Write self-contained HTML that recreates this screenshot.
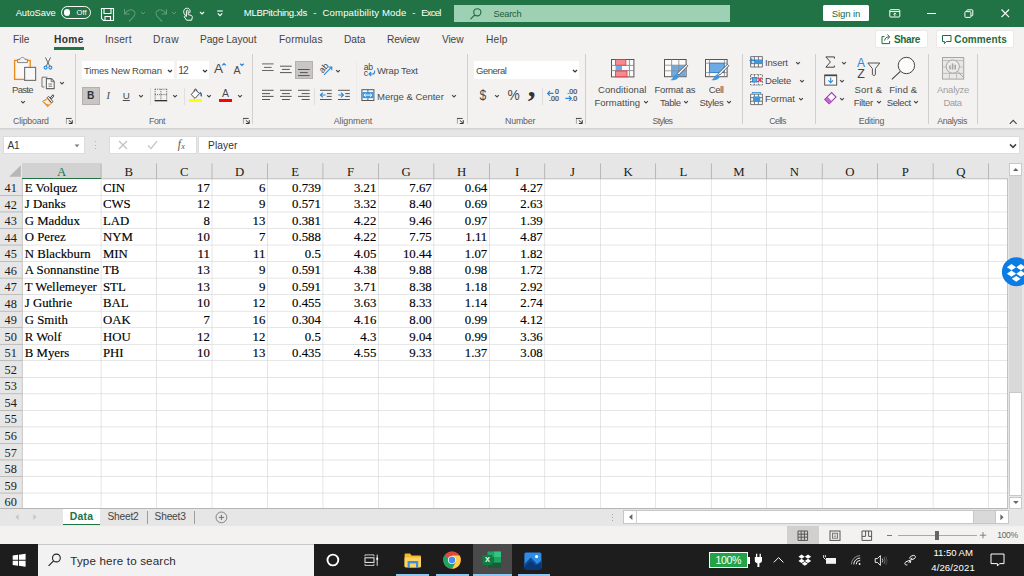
<!DOCTYPE html>
<html lang="en"><head><meta charset="utf-8"><title>MLBPitching.xls - Excel</title>
<style>
html,body{margin:0;padding:0}
body{width:1024px;height:576px;position:relative;overflow:hidden;background:#fff;font-family:'Liberation Sans',sans-serif;}
div,svg,span.t{position:absolute;}
span.t{white-space:pre;}
svg{overflow:visible}
</style></head>
<body>
<div style="left:0px;top:0px;width:1024px;height:26.5px;background:#217346;"></div>
<span class="t" style="left:15.70px;letter-spacing:-0.094px;top:8.0px;font-size:9.4px;line-height:9.4px;color:#fff;">AutoSave</span>
<div style="left:61px;top:6.2px;width:30px;height:12.6px;box-sizing:border-box;border:1px solid #fff;border-radius:7px;"></div>
<div style="left:63.8px;top:9.3px;width:6.4px;height:6.4px;background:#fff;border-radius:50%;"></div>
<span class="t" style="left:76.60px;top:9.1px;font-size:7.6px;line-height:7.6px;color:#fff;">Off</span>
<svg style="left:100px;top:7px;" width="16" height="15" viewBox="0 0 16 15"><path d="M1.5 1.5 H13.5 V13.5 H3.5 L1.5 11.5 Z M4 1.5 V6.5 H11 V1.5 M5 13.5 V9.5 H10.5 V13.5" fill="none" stroke="#fff" stroke-width="1.1"/></svg>
<svg style="left:123px;top:6px;" width="16" height="16" viewBox="0 0 16 16"><path d="M1.5 3 V8 H6.5 M1.8 7.8 C4 3.5 9 2.5 11.5 5.5 C13.5 8 11 10.5 6 15.5" fill="none" stroke="#5f9c7c" stroke-width="1.1"/></svg>
<svg style="left:139.2px;top:8.6px;" width="8" height="8" viewBox="0 0 8 8"><path d="M2 3.0 L4 5.0 L6 3.0" fill="none" stroke="#5f9c7c" stroke-width="1"/></svg>
<svg style="left:152px;top:6px;" width="16" height="16" viewBox="0 0 16 16"><path d="M14.5 3 V8 H9.5 M14.2 7.8 C12 3.5 7 2.5 4.5 5.5 C2.5 8 5 10.5 10 15.5" fill="none" stroke="#5f9c7c" stroke-width="1.1"/></svg>
<svg style="left:169.6px;top:8.6px;" width="8" height="8" viewBox="0 0 8 8"><path d="M2 3.0 L4 5.0 L6 3.0" fill="none" stroke="#5f9c7c" stroke-width="1"/></svg>
<svg style="left:182px;top:7px;" width="12" height="15" viewBox="0 0 12 15"><path d="M3.8 8.5 C1 7 0.8 2 4.3 1.3 C7.5 0.8 8.8 3.5 7.6 6 M4.4 9.5 V4.2 C4.4 2.8 6.2 2.8 6.2 4.2 V7.6 L9.2 8.4 C10.3 8.8 10.4 9.6 10.2 10.8 L9.6 13.2 H4.6 L2.4 10 C2 9 3.2 8.4 4.4 9.5" fill="none" stroke="#fff" stroke-width="1"/></svg>
<svg style="left:197.6px;top:8.8px;" width="8" height="8" viewBox="0 0 8 8"><path d="M2 3.0 L4 5.0 L6 3.0" fill="none" stroke="#fff" stroke-width="1.1"/></svg>
<svg style="left:215px;top:8px;" width="10" height="10" viewBox="0 0 10 10"><path d="M2.2 3 H7.8" stroke="#fff" stroke-width="1.1"/><path d="M2.8 5.4 L5 7.6 L7.2 5.4" fill="none" stroke="#fff" stroke-width="1.1"/></svg>
<span class="t" style="left:243.80px;letter-spacing:-0.346px;top:7.5px;font-size:9.6px;line-height:9.6px;color:#fff;">MLBPitching.xls</span>
<span class="t" style="left:313.30px;top:7.5px;font-size:9.6px;line-height:9.6px;color:#fff;">-</span>
<span class="t" style="left:322.50px;letter-spacing:0.130px;top:7.5px;font-size:9.6px;line-height:9.6px;color:#fff;">Compatibility Mode</span>
<span class="t" style="left:412.30px;top:7.5px;font-size:9.6px;line-height:9.6px;color:#fff;">-</span>
<span class="t" style="left:421.30px;letter-spacing:-0.867px;top:7.5px;font-size:9.6px;line-height:9.6px;color:#fff;">Excel</span>
<div style="left:454px;top:4.6px;width:276px;height:17.5px;background:#9ed0b3;"></div>
<svg style="left:468.8px;top:7px;" width="14" height="14" viewBox="0 0 14 14"><circle cx="8.3" cy="5.3" r="3.6" fill="none" stroke="#1e6b41" stroke-width="1.1"/><path d="M5.8 7.8 L1.5 12.2" stroke="#1e6b41" stroke-width="1.1"/></svg>
<span class="t" style="left:493.50px;letter-spacing:-0.225px;top:9.7px;font-size:9.2px;line-height:9.2px;color:#1e5a38;">Search</span>
<div style="left:823px;top:5.3px;width:45.5px;height:15.5px;background:#fff;border-radius:1.5px;"></div>
<span class="t" style="left:831.75px;letter-spacing:-0.141px;top:8.8px;font-size:9.6px;line-height:9.6px;color:#1e6b41;">Sign in</span>
<svg style="left:889px;top:9px;" width="12" height="9" viewBox="0 0 12 9"><rect x="0.8" y="0.7" width="10" height="7.3" rx="0.8" fill="none" stroke="#fff" stroke-width="1"/><path d="M0.8 2.6 H10.8" stroke="#fff" stroke-width="1"/><path d="M5.8 7.2 V4.2 M4.4 5.4 L5.8 4 L7.2 5.4" fill="none" stroke="#fff" stroke-width="0.9"/></svg>
<div style="left:926.5px;top:12.8px;width:9.5px;height:1.1px;background:#fff;"></div>
<svg style="left:963.5px;top:8.7px;" width="11" height="10" viewBox="0 0 11 10"><rect x="0.9" y="2.6" width="6" height="5.8" rx="0.8" fill="none" stroke="#fff" stroke-width="1"/><path d="M2.8 2.4 V1.6 Q2.8 0.8 3.6 0.8 H8 Q8.8 0.8 8.8 1.6 V6 Q8.8 6.8 8 6.8 H7.2" fill="none" stroke="#fff" stroke-width="1"/></svg>
<svg style="left:1001px;top:9.4px;" width="9" height="9" viewBox="0 0 9 9"><path d="M0.5 0.5 L8.1 8.1 M8.1 0.5 L0.5 8.1" stroke="#fff" stroke-width="1.1"/></svg>
<div style="left:0px;top:26.5px;width:1024px;height:26px;background:#f3f2f1;"></div>
<span class="t" style="left:13.00px;letter-spacing:0.026px;top:34.8px;font-size:10.2px;line-height:10.2px;color:#444;">File</span>
<span class="t" style="left:105.00px;letter-spacing:0.203px;top:34.8px;font-size:10.2px;line-height:10.2px;color:#444;">Insert</span>
<span class="t" style="left:153.00px;letter-spacing:0.573px;top:34.8px;font-size:10.2px;line-height:10.2px;color:#444;">Draw</span>
<span class="t" style="left:200.00px;letter-spacing:-0.072px;top:34.8px;font-size:10.2px;line-height:10.2px;color:#444;">Page Layout</span>
<span class="t" style="left:279.00px;letter-spacing:0.147px;top:34.8px;font-size:10.2px;line-height:10.2px;color:#444;">Formulas</span>
<span class="t" style="left:344.00px;letter-spacing:-0.010px;top:34.8px;font-size:10.2px;line-height:10.2px;color:#444;">Data</span>
<span class="t" style="left:387.00px;letter-spacing:-0.181px;top:34.8px;font-size:10.2px;line-height:10.2px;color:#444;">Review</span>
<span class="t" style="left:442.00px;letter-spacing:-0.135px;top:34.8px;font-size:10.2px;line-height:10.2px;color:#444;">View</span>
<span class="t" style="left:486.00px;letter-spacing:0.182px;top:34.8px;font-size:10.2px;line-height:10.2px;color:#444;">Help</span>
<span class="t" style="left:54.00px;letter-spacing:0.396px;top:34.8px;font-size:10.2px;line-height:10.2px;color:#333;font-weight:700;">Home</span>
<div style="left:54px;top:47px;width:30px;height:2.7px;background:#217346;"></div>
<div style="left:875px;top:30px;width:53px;height:18px;background:#fff;box-sizing:border-box;border:1px solid #ebe9e7;border-radius:2px;"></div>
<svg style="left:880px;top:33.4px;" width="12" height="12" viewBox="0 0 12 12"><path d="M4.5 3.6 H2 V10.6 H9.6 V8" fill="none" stroke="#1e6b41" stroke-width="1"/><path d="M4.6 7.6 C5 5 6.6 3.9 9 3.9 M7.4 1.6 L9.8 3.9 L7.4 6.2" fill="none" stroke="#1e6b41" stroke-width="1"/></svg>
<span class="t" style="left:894.00px;letter-spacing:-0.349px;top:34.6px;font-size:10px;line-height:10px;color:#1e6b41;font-weight:700;">Share</span>
<div style="left:935.5px;top:30px;width:78.5px;height:18px;background:#fff;box-sizing:border-box;border:1px solid #ebe9e7;border-radius:2px;"></div>
<svg style="left:941px;top:33.8px;" width="12" height="12" viewBox="0 0 12 12"><path d="M1.5 1.5 H10 V7.5 H5.4 L3.4 9.6 V7.5 H1.5 Z" fill="none" stroke="#1e6b41" stroke-width="1"/></svg>
<span class="t" style="left:954.30px;letter-spacing:0.116px;top:34.6px;font-size:10px;line-height:10px;color:#1e6b41;font-weight:700;">Comments</span>
<div style="left:0px;top:52px;width:1024px;height:76px;background:#f3f2f1;"></div>
<div style="left:0px;top:127.5px;width:1024px;height:34.5px;background:#e6e6e6;"></div>
<div style="left:0px;top:127.5px;width:1024px;height:3.5px;background:linear-gradient(#d2d0ce,#e6e6e6);"></div>
<div style="left:75.2px;top:54px;width:1px;height:70px;background:#d2d0ce;"></div>
<div style="left:252.3px;top:54px;width:1px;height:70px;background:#d2d0ce;"></div>
<div style="left:467.3px;top:54px;width:1px;height:70px;background:#d2d0ce;"></div>
<div style="left:585px;top:54px;width:1px;height:70px;background:#d2d0ce;"></div>
<div style="left:741.6px;top:54px;width:1px;height:70px;background:#d2d0ce;"></div>
<div style="left:815.4px;top:54px;width:1px;height:70px;background:#d2d0ce;"></div>
<div style="left:928.2px;top:54px;width:1px;height:70px;background:#d2d0ce;"></div>
<div style="left:977.3px;top:54px;width:1px;height:70px;background:#d2d0ce;"></div>
<span class="t" style="left:13.00px;letter-spacing:-0.207px;top:117.3px;font-size:8.8px;line-height:8.8px;color:#605e5c;">Clipboard</span>
<span class="t" style="left:149.00px;letter-spacing:-0.370px;top:117.3px;font-size:8.8px;line-height:8.8px;color:#605e5c;">Font</span>
<span class="t" style="left:333.80px;letter-spacing:-0.078px;top:117.3px;font-size:8.8px;line-height:8.8px;color:#605e5c;">Alignment</span>
<span class="t" style="left:505.00px;letter-spacing:-0.159px;top:117.3px;font-size:8.8px;line-height:8.8px;color:#605e5c;">Number</span>
<span class="t" style="left:652.50px;letter-spacing:-0.694px;top:117.3px;font-size:8.8px;line-height:8.8px;color:#605e5c;">Styles</span>
<span class="t" style="left:769.30px;letter-spacing:-0.641px;top:117.3px;font-size:8.8px;line-height:8.8px;color:#605e5c;">Cells</span>
<span class="t" style="left:858.80px;letter-spacing:-0.234px;top:117.3px;font-size:8.8px;line-height:8.8px;color:#605e5c;">Editing</span>
<span class="t" style="left:937.30px;letter-spacing:-0.395px;top:117.3px;font-size:8.8px;line-height:8.8px;color:#605e5c;">Analysis</span>
<svg style="left:65.8px;top:118px;" width="8" height="8" viewBox="0 0 8 8"><path d="M0.4 0.4 V5.8" stroke="#9a9a9a" stroke-width="0.9" fill="none"/><path d="M0 0.45 H5.7" stroke="#3a3a3a" stroke-width="0.9" fill="none"/><path d="M2.8 2.3 L6 5.2 M6.25 2.2 V5.5 H2.8" fill="none" stroke="#333" stroke-width="1"/></svg>
<svg style="left:243.4px;top:118px;" width="8" height="8" viewBox="0 0 8 8"><path d="M0.4 0.4 V5.8" stroke="#9a9a9a" stroke-width="0.9" fill="none"/><path d="M0 0.45 H5.7" stroke="#3a3a3a" stroke-width="0.9" fill="none"/><path d="M2.8 2.3 L6 5.2 M6.25 2.2 V5.5 H2.8" fill="none" stroke="#333" stroke-width="1"/></svg>
<svg style="left:457.4px;top:118px;" width="8" height="8" viewBox="0 0 8 8"><path d="M0.4 0.4 V5.8" stroke="#9a9a9a" stroke-width="0.9" fill="none"/><path d="M0 0.45 H5.7" stroke="#3a3a3a" stroke-width="0.9" fill="none"/><path d="M2.8 2.3 L6 5.2 M6.25 2.2 V5.5 H2.8" fill="none" stroke="#333" stroke-width="1"/></svg>
<svg style="left:576.2px;top:118px;" width="8" height="8" viewBox="0 0 8 8"><path d="M0.4 0.4 V5.8" stroke="#9a9a9a" stroke-width="0.9" fill="none"/><path d="M0 0.45 H5.7" stroke="#3a3a3a" stroke-width="0.9" fill="none"/><path d="M2.8 2.3 L6 5.2 M6.25 2.2 V5.5 H2.8" fill="none" stroke="#333" stroke-width="1"/></svg>
<svg style="left:1008px;top:117px;" width="10" height="10" viewBox="0 0 10 10"><path d="M1.8 6.8 L5.2 3.4 L8.6 6.8" fill="none" stroke="#444" stroke-width="1.1"/></svg>
<span class="t" style="left:12.00px;letter-spacing:-0.699px;top:85.25px;font-size:9.5px;line-height:9.5px;color:#4a4a4a;">Paste</span>
<svg style="left:18.5px;top:98px;" width="8" height="8" viewBox="0 0 8 8"><path d="M2.1 3.05 L4 4.95 L5.9 3.05" fill="none" stroke="#484848" stroke-width="1.1"/></svg>
<svg style="left:58px;top:79.2px;" width="8" height="8" viewBox="0 0 8 8"><path d="M2.1 3.05 L4 4.95 L5.9 3.05" fill="none" stroke="#484848" stroke-width="1.1"/></svg>
<div style="left:82.4px;top:61.1px;width:91.6px;height:17.9px;background:#fff;"></div>
<span class="t" style="left:84.00px;letter-spacing:-0.173px;top:66.05px;font-size:9.5px;line-height:9.5px;color:#4a4a4a;">Times New Roman</span>
<svg style="left:166px;top:66.6px;" width="8" height="8" viewBox="0 0 8 8"><path d="M2.0 3.0 L4 5.0 L6.0 3.0" fill="none" stroke="#333" stroke-width="1.2"/></svg>
<div style="left:176.6px;top:61.1px;width:32.6px;height:17.9px;background:#fff;"></div>
<span class="t" style="left:178.20px;letter-spacing:-0.744px;top:65.5px;font-size:10.2px;line-height:10.2px;color:#4a4a4a;">12</span>
<svg style="left:201px;top:66.6px;" width="8" height="8" viewBox="0 0 8 8"><path d="M2.0 3.0 L4 5.0 L6.0 3.0" fill="none" stroke="#333" stroke-width="1.2"/></svg>
<span class="t" style="left:214.00px;top:61.8px;font-size:13.6px;line-height:13.6px;color:#4a4a4a;">A</span>
<svg style="left:221.2px;top:62.4px;" width="6" height="5" viewBox="0 0 6 5"><path d="M1.2 3.4 L3 1.7 L4.8 3.4" fill="none" stroke="#2b88d8" stroke-width="1.3"/></svg>
<span class="t" style="left:233.50px;top:64.7px;font-size:10.6px;line-height:10.6px;color:#4a4a4a;">A</span>
<svg style="left:239.4px;top:62.4px;" width="6" height="5" viewBox="0 0 6 5"><path d="M1.2 1.7 L3 3.4 L4.8 1.7" fill="none" stroke="#2b88d8" stroke-width="1.3"/></svg>
<div style="left:82px;top:87px;width:17.5px;height:18px;background:#c8c6c4;box-sizing:border-box;border:1px solid #b3b0ad;"></div>
<span class="t" style="left:87.12px;top:91.2px;font-size:10.2px;line-height:10.2px;color:#333;font-weight:700;">B</span>
<span class="t" style="left:106.57px;top:91.0px;font-size:10.4px;line-height:10.4px;color:#4a4a4a;font-family:'Liberation Serif',serif;font-style:italic;">I</span>
<span class="t" style="left:122.76px;top:90.9px;font-size:9.8px;line-height:9.8px;color:#4a4a4a;text-decoration:underline;text-underline-offset:1.2px;">U</span>
<svg style="left:137px;top:92px;" width="8" height="8" viewBox="0 0 8 8"><path d="M2.1 3.05 L4 4.95 L5.9 3.05" fill="none" stroke="#484848" stroke-width="1.1"/></svg>
<div style="left:150.3px;top:87.5px;width:1px;height:17px;background:#e1dfdd;"></div>
<svg style="left:171px;top:92px;" width="8" height="8" viewBox="0 0 8 8"><path d="M2.1 3.05 L4 4.95 L5.9 3.05" fill="none" stroke="#484848" stroke-width="1.1"/></svg>
<div style="left:183.8px;top:87.5px;width:1px;height:17px;background:#e1dfdd;"></div>
<svg style="left:205px;top:92px;" width="8" height="8" viewBox="0 0 8 8"><path d="M2.1 3.05 L4 4.95 L5.9 3.05" fill="none" stroke="#484848" stroke-width="1.1"/></svg>
<svg style="left:235.5px;top:92px;" width="8" height="8" viewBox="0 0 8 8"><path d="M2.1 3.05 L4 4.95 L5.9 3.05" fill="none" stroke="#484848" stroke-width="1.1"/></svg>
<span class="t" style="left:222.03px;top:89.0px;font-size:10.4px;line-height:10.4px;color:#4a4a4a;">A</span>
<div style="left:219px;top:99px;width:13px;height:2.8px;background:#ff0000;"></div>
<div style="left:189px;top:99px;width:13px;height:2.8px;background:#ffff00;"></div>
<div style="left:295px;top:60.8px;width:17.5px;height:18.7px;background:#c8c6c4;box-sizing:border-box;border:1px solid #b3b0ad;"></div>
<svg style="left:333.6px;top:66.5px;" width="8" height="8" viewBox="0 0 8 8"><path d="M2.1 3.05 L4 4.95 L5.9 3.05" fill="none" stroke="#484848" stroke-width="1.1"/></svg>
<div style="left:356px;top:61px;width:1px;height:44px;background:#edebe9;"></div>
<div style="left:314.3px;top:87.5px;width:1px;height:17px;background:#e1dfdd;"></div>
<span class="t" style="left:377.00px;letter-spacing:-0.178px;top:65.55px;font-size:9.5px;line-height:9.5px;color:#4a4a4a;">Wrap Text</span>
<span class="t" style="left:377.00px;letter-spacing:-0.020px;top:92.15px;font-size:9.5px;line-height:9.5px;color:#4a4a4a;">Merge &amp; Center</span>
<svg style="left:450.2px;top:92.2px;" width="8" height="8" viewBox="0 0 8 8"><path d="M2.1 3.05 L4 4.95 L5.9 3.05" fill="none" stroke="#484848" stroke-width="1.1"/></svg>
<div style="left:474.2px;top:61.1px;width:105.3px;height:17.9px;background:#fff;"></div>
<span class="t" style="left:476.00px;letter-spacing:-0.469px;top:66.05px;font-size:9.5px;line-height:9.5px;color:#4a4a4a;">General</span>
<svg style="left:571px;top:66.6px;" width="8" height="8" viewBox="0 0 8 8"><path d="M2.0 3.0 L4 5.0 L6.0 3.0" fill="none" stroke="#333" stroke-width="1.2"/></svg>
<span class="t" style="left:478.81px;top:88.1px;font-size:14.2px;line-height:14.2px;color:#4a4a4a;transform:scaleX(0.86);transform-origin:50% 50%;">$</span>
<svg style="left:492.8px;top:92px;" width="8" height="8" viewBox="0 0 8 8"><path d="M2.1 3.05 L4 4.95 L5.9 3.05" fill="none" stroke="#484848" stroke-width="1.1"/></svg>
<span class="t" style="left:506.88px;top:88.2px;font-size:14.8px;line-height:14.8px;color:#4a4a4a;transform:scaleX(0.93);transform-origin:50% 50%;">%</span>
<span class="t" style="left:528.46px;top:70.6px;font-size:30px;line-height:30px;color:#333;font-weight:700;font-family:'Liberation Serif',serif;transform:scaleX(1.05);transform-origin:50% 50%;">,</span>
<div style="left:542.3px;top:87.5px;width:1px;height:17px;background:#e1dfdd;"></div>
<span class="t" style="left:598.00px;letter-spacing:0.095px;top:84.95px;font-size:9.5px;line-height:9.5px;color:#4a4a4a;">Conditional</span>
<span class="t" style="left:594.50px;letter-spacing:0.010px;top:97.75px;font-size:9.5px;line-height:9.5px;color:#4a4a4a;">Formatting</span>
<svg style="left:642.2px;top:98.0px;" width="8" height="8" viewBox="0 0 8 8"><path d="M2.05 3.025 L4 4.975 L5.95 3.025" fill="none" stroke="#444" stroke-width="1.05"/></svg>
<span class="t" style="left:654.50px;letter-spacing:-0.221px;top:84.95px;font-size:9.5px;line-height:9.5px;color:#4a4a4a;">Format as</span>
<span class="t" style="left:660.00px;letter-spacing:-0.430px;top:97.75px;font-size:9.5px;line-height:9.5px;color:#4a4a4a;">Table</span>
<svg style="left:682.3px;top:98.0px;" width="8" height="8" viewBox="0 0 8 8"><path d="M2.05 3.025 L4 4.975 L5.95 3.025" fill="none" stroke="#444" stroke-width="1.05"/></svg>
<span class="t" style="left:708.80px;letter-spacing:-0.458px;top:84.95px;font-size:9.5px;line-height:9.5px;color:#4a4a4a;">Cell</span>
<span class="t" style="left:699.50px;letter-spacing:-0.315px;top:97.75px;font-size:9.5px;line-height:9.5px;color:#4a4a4a;">Styles</span>
<svg style="left:725.2px;top:98.0px;" width="8" height="8" viewBox="0 0 8 8"><path d="M2.05 3.025 L4 4.975 L5.95 3.025" fill="none" stroke="#444" stroke-width="1.05"/></svg>
<span class="t" style="left:765.00px;letter-spacing:-0.153px;top:57.85px;font-size:9.5px;line-height:9.5px;color:#4a4a4a;">Insert</span>
<svg style="left:794.3px;top:58.8px;" width="8" height="8" viewBox="0 0 8 8"><path d="M2.1 3.05 L4 4.95 L5.9 3.05" fill="none" stroke="#484848" stroke-width="1.1"/></svg>
<span class="t" style="left:765.00px;letter-spacing:-0.234px;top:76.05px;font-size:9.5px;line-height:9.5px;color:#4a4a4a;">Delete</span>
<svg style="left:797.8px;top:77px;" width="8" height="8" viewBox="0 0 8 8"><path d="M2.1 3.05 L4 4.95 L5.9 3.05" fill="none" stroke="#484848" stroke-width="1.1"/></svg>
<span class="t" style="left:765.00px;letter-spacing:-0.019px;top:94.05px;font-size:9.5px;line-height:9.5px;color:#4a4a4a;">Format</span>
<svg style="left:796.8px;top:95px;" width="8" height="8" viewBox="0 0 8 8"><path d="M2.1 3.05 L4 4.95 L5.9 3.05" fill="none" stroke="#484848" stroke-width="1.1"/></svg>
<svg style="left:840.3px;top:58.5px;" width="8" height="8" viewBox="0 0 8 8"><path d="M2.1 3.05 L4 4.95 L5.9 3.05" fill="none" stroke="#484848" stroke-width="1.1"/></svg>
<svg style="left:838.2px;top:76.8px;" width="8" height="8" viewBox="0 0 8 8"><path d="M2.1 3.05 L4 4.95 L5.9 3.05" fill="none" stroke="#484848" stroke-width="1.1"/></svg>
<svg style="left:838.2px;top:95px;" width="8" height="8" viewBox="0 0 8 8"><path d="M2.1 3.05 L4 4.95 L5.9 3.05" fill="none" stroke="#484848" stroke-width="1.1"/></svg>
<span class="t" style="left:854.50px;letter-spacing:0.219px;top:84.95px;font-size:9.5px;line-height:9.5px;color:#4a4a4a;">Sort &amp;</span>
<span class="t" style="left:853.80px;letter-spacing:-0.365px;top:97.75px;font-size:9.5px;line-height:9.5px;color:#4a4a4a;">Filter</span>
<svg style="left:874.8px;top:98.0px;" width="8" height="8" viewBox="0 0 8 8"><path d="M2.05 3.025 L4 4.975 L5.95 3.025" fill="none" stroke="#444" stroke-width="1.05"/></svg>
<span class="t" style="left:889.20px;letter-spacing:0.106px;top:84.95px;font-size:9.5px;line-height:9.5px;color:#4a4a4a;">Find &amp;</span>
<span class="t" style="left:886.80px;letter-spacing:-0.421px;top:97.75px;font-size:9.5px;line-height:9.5px;color:#4a4a4a;">Select</span>
<svg style="left:912.3px;top:98.0px;" width="8" height="8" viewBox="0 0 8 8"><path d="M2.05 3.025 L4 4.975 L5.95 3.025" fill="none" stroke="#444" stroke-width="1.05"/></svg>
<span class="t" style="left:937.00px;letter-spacing:-0.252px;top:85.15px;font-size:9.5px;line-height:9.5px;color:#a19f9d;">Analyze</span>
<span class="t" style="left:943.50px;letter-spacing:-0.526px;top:97.55px;font-size:9.5px;line-height:9.5px;color:#a19f9d;">Data</span>
<div style="left:3.4px;top:136px;width:81.4px;height:18.4px;background:#fff;box-sizing:border-box;border:1px solid #dcdcdc;"></div>
<span class="t" style="left:7.60px;letter-spacing:-0.469px;top:140.5px;font-size:10.2px;line-height:10.2px;color:#333;">A1</span>
<svg style="left:73px;top:142px;" width="8" height="8" viewBox="0 0 8 8"><path d="M1.6 2.6 L4 5.2 L6.4 2.6 Z" fill="#777"/></svg>
<div style="left:95.2px;top:141.3px;width:1.2px;height:1.2px;background:#b5b5b5;"></div>
<div style="left:95.2px;top:144.6px;width:1.2px;height:1.2px;background:#b5b5b5;"></div>
<div style="left:95.2px;top:147.9px;width:1.2px;height:1.2px;background:#b5b5b5;"></div>
<div style="left:108.6px;top:136px;width:88px;height:18.4px;background:#fff;box-sizing:border-box;border:1px solid #dcdcdc;"></div>
<svg style="left:118px;top:140px;" width="10" height="10" viewBox="0 0 10 10"><path d="M1 1 L9 9 M9 1 L1 9" stroke="#c2c2c2" stroke-width="1.3"/></svg>
<svg style="left:147px;top:140px;" width="11" height="10" viewBox="0 0 11 10"><path d="M1 5.4 L4 8.6 L10 1.2" fill="none" stroke="#c2c2c2" stroke-width="1.3"/></svg>
<span class="t" style="left:177.80px;top:139.25px;font-size:11.5px;line-height:11.5px;color:#555;font-family:'Liberation Serif',serif;font-style:italic;">f</span>
<span class="t" style="left:181.20px;top:142.5px;font-size:8.2px;line-height:8.2px;color:#555;font-family:'Liberation Serif',serif;font-style:italic;">x</span>
<div style="left:198.3px;top:136px;width:821.9px;height:18.4px;background:#fff;box-sizing:border-box;border:1px solid #dcdcdc;"></div>
<span class="t" style="left:208.00px;letter-spacing:0.082px;top:140.6px;font-size:10.2px;line-height:10.2px;color:#333;">Player</span>
<svg style="left:1008px;top:141px;" width="10" height="10" viewBox="0 0 10 10"><path d="M2 3.4 L5 6.4 L8 3.4" fill="none" stroke="#444" stroke-width="1.5"/></svg>
<svg style="left:13px;top:56px;" width="24" height="26" viewBox="0 0 24 26"><rect x="1.6" y="4.4" width="15.6" height="19" fill="#fdf3e3" stroke="#e8891d" stroke-width="1.3"/><rect x="3.6" y="6.4" width="11.6" height="15" fill="#faf9f8"/><path d="M4.6 6.6 V3.4 H7 C7 0.8 12 0.8 12 3.4 H14.4 V6.6 Z" fill="#f3f2f1" stroke="#8a8886" stroke-width="1"/><rect x="11.6" y="11.4" width="11" height="13" fill="#f8f8f8" stroke="#7a7876" stroke-width="1.2"/></svg>
<svg style="left:43px;top:56px;" width="10" height="15" viewBox="0 0 10 15"><path d="M2.4 1.4 L6.6 10 M7.6 1.4 L3.4 10" stroke="#666" stroke-width="1" fill="none"/><circle cx="2.6" cy="11.6" r="1.5" fill="none" stroke="#2b88d8" stroke-width="1.1"/><circle cx="7.4" cy="11.6" r="1.5" fill="none" stroke="#2b88d8" stroke-width="1.1"/></svg>
<svg style="left:41px;top:75.5px;" width="15" height="14" viewBox="0 0 15 14"><path d="M3.4 11 H1 V1.2 H6.4 " fill="none" stroke="#777" stroke-width="1"/><path d="M5.4 2.6 H10.4 L13.2 5.4 V12.6 H5.4 Z" fill="#fafafa" stroke="#666" stroke-width="1.1"/><path d="M10.2 2.8 V5.6 H13 M7.4 8 H11.2 M7.4 10.2 H11.2" fill="none" stroke="#666" stroke-width="0.9"/></svg>
<svg style="left:38px;top:92px;" width="20" height="18" viewBox="0 0 20 18"><path d="M4.2 9.6 L9.2 6.6 L13.2 11.4 L9.4 15" fill="none" stroke="#e8821a" stroke-width="0.8" stroke-linejoin="round"/><path d="M4.2 9.6 L9.4 15 L12.6 12 Q9 13.4 6.4 10 Z" fill="#ec8f26"/><path d="M5.4 9.2 L8.4 7.8" stroke="#e8821a" stroke-width="0.7"/><path d="M12.8 6.6 L15 3.8" stroke="#444" stroke-width="2.4" stroke-linecap="round"/><path d="M12.9 6.5 L14.9 3.9" stroke="#f3f2f1" stroke-width="1" stroke-linecap="round"/><path d="M9.2 5.6 L10.6 4.4 L15 9.6 L13.6 10.8 Z" fill="#fafafa" stroke="#444" stroke-width="0.9" stroke-linejoin="round"/></svg>
<svg style="left:154px;top:88px;" width="14" height="14" viewBox="0 0 14 14"><path d="M0.9 1.2 H12.9 M0.9 6.6 H12.9 M1.1 1 V12 M6.9 1 V12 M12.7 1 V12" fill="none" stroke="#555" stroke-width="0.9" stroke-dasharray="1.07 1.07"/><path d="M0.6 12.7 H13.2" stroke="#1a1a1a" stroke-width="1.2"/></svg>
<svg style="left:189px;top:87.5px;" width="14" height="12" viewBox="0 0 14 12"><path d="M2.2 6.6 L6.4 1.8 L10.6 5.6 L6 10.4 Z" fill="#fafafa" stroke="#4a4a4a" stroke-width="1" stroke-linejoin="round"/><path d="M5.2 3.4 C4.8 0.2 8 0.2 7.8 3" fill="none" stroke="#4a4a4a" stroke-width="0.9"/><path d="M10.8 4.4 C12.4 5.4 12.6 7 12 8.4" fill="none" stroke="#2b6cb0" stroke-width="1.4"/></svg>
<svg style="left:262px;top:62px" width="14" height="14" viewBox="0 0 14 14"><path d="M0 1.9 H11.6 M2 5.4 H9.6 M0 8.5 H11.6 " stroke="#666" stroke-width="1.0" fill="none"/></svg>
<svg style="left:280px;top:62px" width="14" height="14" viewBox="0 0 14 14"><path d="M0 4.2 H11.7 M1.9 7.4 H9.8 M0 10.6 H11.7 " stroke="#555" stroke-width="1.0" fill="none"/></svg>
<svg style="left:298px;top:62px" width="14" height="14" viewBox="0 0 14 14"><path d="M0 7.5 H11.7 M1.9 10.6 H9.8 M0 13.6 H11.7 " stroke="#555" stroke-width="1.0" fill="none"/></svg>
<svg style="left:262px;top:90px" width="14" height="14" viewBox="0 0 14 14"><path d="M0 0.3 H11.6 M0 3.6 H8 M0 6.4 H11.6 M0 9.5 H8 " stroke="#555" stroke-width="1.0" fill="none"/></svg>
<svg style="left:280px;top:90px" width="14" height="14" viewBox="0 0 14 14"><path d="M0 0.3 H11.7 M1.9 3.6 H9.9 M0 6.4 H11.7 M1.9 9.5 H9.9 " stroke="#555" stroke-width="1.0" fill="none"/></svg>
<svg style="left:298px;top:90px" width="14" height="14" viewBox="0 0 14 14"><path d="M0 0.3 H11.7 M3.6 3.6 H11.7 M0 6.4 H11.7 M3.6 9.5 H11.7 " stroke="#555" stroke-width="1.0" fill="none"/></svg>
<svg style="left:320px;top:90px" width="14" height="14" viewBox="0 0 14 14"><path d="M0 0.3 H11.7 M6.8 3.6 H11.7 M6.8 6.4 H11.7 M0 9.5 H11.7 " stroke="#555" stroke-width="1.0" fill="none"/></svg>
<svg style="left:338px;top:90px" width="14" height="14" viewBox="0 0 14 14"><path d="M0 0.3 H11.9 M7.2 3.6 H11.9 M7.2 6.4 H11.9 M0 9.5 H11.9 " stroke="#555" stroke-width="1.0" fill="none"/></svg>
<svg style="left:320px;top:91px;" width="7" height="8" viewBox="0 0 7 8"><path d="M0.4 4 H5.6 M2.8 1.6 L0.4 4 L2.8 6.4" fill="none" stroke="#2b88d8" stroke-width="1.2"/></svg>
<svg style="left:338px;top:91px;" width="7" height="8" viewBox="0 0 7 8"><path d="M0.2 4 H5.4 M3 1.6 L5.4 4 L3 6.4" fill="none" stroke="#2b88d8" stroke-width="1.2"/></svg>
<span class="t" style="left:323.7px;top:67.8px;font-size:8.8px;line-height:8.8px;color:#444;transform:translate(-50%,-50%) rotate(-50deg);">ab</span>
<svg style="left:322px;top:64px;" width="12" height="12" viewBox="0 0 12 12"><path d="M2 10.8 L9.6 3.2 M6.6 3 H9.8 V6.2" fill="none" stroke="#2b88d8" stroke-width="1.1"/></svg>
<span class="t" style="left:363.80px;letter-spacing:-0.363px;top:62.6px;font-size:8.6px;line-height:8.6px;color:#444;">ab</span>
<span class="t" style="left:363.80px;top:68.7px;font-size:8.6px;line-height:8.6px;color:#444;">c</span>
<svg style="left:367.5px;top:69.5px;" width="8" height="7" viewBox="0 0 8 7"><path d="M6.6 0.6 V2 C6.6 3.6 5.6 4 4.4 4 H1.2 M3.2 2 L1 4 L3.2 6" fill="none" stroke="#2b88d8" stroke-width="1.1"/></svg>
<svg style="left:361px;top:89px;" width="14" height="12" viewBox="0 0 14 12"><rect x="0.9" y="0.7" width="12" height="10.8" fill="#fafafa" stroke="#555" stroke-width="1"/><path d="M6.9 0.7 V11.5" stroke="#555" stroke-width="0.9"/><rect x="1.3" y="3" width="11.2" height="6.2" fill="#3f97dd"/><path d="M3 6.1 H10.8 M4.6 4.5 L3 6.1 L4.6 7.7 M9.2 4.5 L10.8 6.1 L9.2 7.7" fill="none" stroke="#fff" stroke-width="1"/></svg>
<span class="t" style="left:555.00px;top:88.1px;font-size:7px;line-height:7px;color:#444;-webkit-text-stroke:0.2px #444;">0</span>
<span class="t" style="left:548.90px;letter-spacing:0.133px;top:94.8px;font-size:7px;line-height:7px;color:#444;-webkit-text-stroke:0.2px #444;">.00</span>
<svg style="left:546.5px;top:89.5px;" width="8" height="7" viewBox="0 0 8 7"><path d="M0.6 3.4 H6.6 M3 1 L0.6 3.4 L3 5.8" fill="none" stroke="#2b88d8" stroke-width="1.1"/></svg>
<span class="t" style="left:567.20px;letter-spacing:0.133px;top:88.1px;font-size:7px;line-height:7px;color:#444;-webkit-text-stroke:0.2px #444;">.00</span>
<span class="t" style="left:571.20px;letter-spacing:0.156px;top:94.8px;font-size:7px;line-height:7px;color:#444;-webkit-text-stroke:0.2px #444;">.0</span>
<svg style="left:564.6px;top:95.3px;" width="8" height="7" viewBox="0 0 8 7"><path d="M0.4 3.4 H6.4 M4 1 L6.4 3.4 L4 5.8" fill="none" stroke="#2b88d8" stroke-width="1.1"/></svg>
<svg style="left:611px;top:59px;" width="24" height="19" viewBox="0 0 24 19"><rect x="0.5" y="0.5" width="22.4" height="17.4" fill="#fbfbfb" stroke="#555" stroke-width="1"/><path d="M0.5 6.4 H22.9 M0.5 11.6 H22.9 M18.4 0.5 V17.9" stroke="#8a8886" stroke-width="0.9"/><rect x="4.6" y="0.6" width="10.3" height="5.6" fill="#f58a90" stroke="#e2343f" stroke-width="0.8"/><rect x="4.6" y="6.8" width="6.4" height="4.4" fill="#6cabe3"/><rect x="4.6" y="12" width="11.4" height="5.8" fill="#f58a90" stroke="#e2343f" stroke-width="0.8"/></svg>
<svg style="left:663.5px;top:59px;" width="25" height="22" viewBox="0 0 25 22"><rect x="0.5" y="0.5" width="21.6" height="17.2" fill="#fbfbfb" stroke="#555" stroke-width="1"/><rect x="7.6" y="6.2" width="14" height="11" fill="#6cabe3"/><path d="M0.5 6.2 H22 M0.5 11.8 H22 M7.6 0.5 V17.6 M14.8 0.5 V17.6" stroke="#8a8886" stroke-width="0.8"/><path d="M13.2 14.4 L22.4 5.4 L23.8 6.8 L14.8 16 Z" fill="#fafafa" stroke="#555" stroke-width="0.9"/><path d="M6 21 C9 20.4 9.4 16.4 12.4 15 L14.6 16.8 C15.2 19.6 11 22.2 6 21 Z" fill="#3f97dd"/></svg>
<svg style="left:704.5px;top:59px;" width="25" height="22" viewBox="0 0 25 22"><rect x="0.5" y="0.5" width="21.6" height="17.2" fill="#fbfbfb" stroke="#555" stroke-width="1"/><path d="M0.5 4.2 H22 M0.5 13.6 H22 M4.4 0.5 V17.6 M19.4 0.5 V17.6" stroke="#8a8886" stroke-width="0.8"/><rect x="4.6" y="4.2" width="14.6" height="9.4" fill="#6cabe3" stroke="#2b7cd3" stroke-width="0.8"/><path d="M13.2 14.4 L22.4 5.4 L23.8 6.8 L14.8 16 Z" fill="#fafafa" stroke="#555" stroke-width="0.9"/><path d="M6 21 C9 20.4 9.4 16.4 12.4 15 L14.6 16.8 C15.2 19.6 11 22.2 6 21 Z" fill="#3f97dd"/></svg>
<svg style="left:750px;top:56.3px;" width="14" height="12" viewBox="0 0 14 12"><path d="M0.6 0.6 H12.4 V11 H0.6 Z M0.6 4 H12.4 M0.6 7.6 H12.4 M4.4 0.6 V11 M8.4 0.6 V11" fill="#fbfbfb" stroke="#666" stroke-width="0.9"/><rect x="4.6" y="4" width="7.8" height="3.6" fill="#3f97dd"/><path d="M0 4.6 H5.4 M2.2 2.4 L0 4.6 L2.2 6.8" fill="none" stroke="#2b88d8" stroke-width="1.1"/></svg>
<svg style="left:750px;top:74.3px;" width="14" height="12" viewBox="0 0 14 12"><path d="M0.6 0.6 H12.4 V11 H0.6 Z M0.6 4 H12.4 M0.6 7.6 H12.4 M4.4 0.6 V11 M8.4 0.6 V11" fill="#fbfbfb" stroke="#666" stroke-width="0.9" stroke-dasharray="2 1"/><rect x="2.4" y="3.6" width="4.4" height="4.4" fill="#6cabe3" stroke="#2b7cd3" stroke-width="0.9"/><path d="M8.4 4 L11.6 7.4 M11.6 4 L8.4 7.4" stroke="#e2343f" stroke-width="1.1"/></svg>
<svg style="left:750px;top:92px;" width="14" height="13" viewBox="0 0 14 13"><g transform="translate(0,1.6)"><path d="M0.6 0.6 H12.4 V11 H0.6 Z M0.6 4 H12.4 M0.6 7.6 H12.4 M4.4 0.6 V11 M8.4 0.6 V11" fill="#fbfbfb" stroke="#666" stroke-width="0.9"/></g><rect x="3" y="4.4" width="7.2" height="5.6" fill="#3f97dd"/><path d="M2.4 0.6 H10.6 M2.4 0 V1.6 M10.6 0 V1.6" stroke="#2b88d8" stroke-width="0.9"/></svg>
<svg style="left:825px;top:55.8px;" width="11" height="13" viewBox="0 0 11 13"><path d="M9.4 2.6 V0.9 H0.9 L5.4 6 L0.9 11.2 H9.4 V9.6" fill="none" stroke="#444" stroke-width="1"/></svg>
<svg style="left:823.6px;top:74px;" width="14" height="12" viewBox="0 0 14 12"><rect x="0.7" y="0.9" width="12" height="10.2" fill="#fafafa" stroke="#444" stroke-width="0.9"/><path d="M0.7 1.6 H12.7" stroke="#444" stroke-width="1.2"/><path d="M6.7 3.6 V8.6 M4.4 6.4 L6.7 8.8 L9 6.4" fill="none" stroke="#2b88d8" stroke-width="1.1"/></svg>
<svg style="left:823.8px;top:92px;" width="13" height="13" viewBox="0 0 13 13"><path d="M0.8 7.4 L7.6 0.6 L12 5 L5.2 11.8 Z" fill="#fafafa" stroke="#a33fb5" stroke-width="1.1"/><path d="M0.8 7.4 L3.2 5 L7.6 9.4 L5.2 11.8 Z" fill="#c566d4" stroke="#a33fb5" stroke-width="0.8"/></svg>
<span class="t" style="left:857.00px;top:57.3px;font-size:12px;line-height:12px;color:#2b88d8;">A</span>
<span class="t" style="left:857.30px;top:68.3px;font-size:12.4px;line-height:12.4px;color:#444;">Z</span>
<svg style="left:866.6px;top:61.8px;" width="14" height="15" viewBox="0 0 14 15"><path d="M0.8 1 H12.8 L8.4 6.6 V12.6 C8.4 13.6 5.4 13.6 5.4 12.6 V6.6 Z" fill="none" stroke="#555" stroke-width="1"/></svg>
<svg style="left:890px;top:56px;" width="26" height="25" viewBox="0 0 26 25"><circle cx="16.4" cy="9.5" r="8.2" fill="#fbfbfb" stroke="#444" stroke-width="1"/><path d="M10.4 15.4 L1.8 23.4" stroke="#444" stroke-width="1.1"/></svg>
<svg style="left:942px;top:57px;" width="23" height="23" viewBox="0 0 23 23"><rect x="0.5" y="0.5" width="21.2" height="21.6" fill="#e9e8e7" stroke="#a8a6a4" stroke-width="1"/><path d="M0.5 3.6 H21.7 M0.5 10 H21.7 M0.5 16.4 H21.7 M7.4 3.6 V22 M14.6 3.6 V22" stroke="#b4b2b0" stroke-width="0.8"/><circle cx="10.8" cy="9.6" r="6.6" fill="#ecebea" stroke="#a8a6a4" stroke-width="1"/><path d="M15.6 14.2 L21.4 20.4" stroke="#a8a6a4" stroke-width="1"/><path d="M8 12.4 V8.6 M10.6 12.4 V6.6 M13.2 12.4 V7.8" stroke="#a8a6a4" stroke-width="1.6"/></svg>
<div style="left:0px;top:162px;width:1024px;height:17px;background:#e6e6e6;"></div>
<div style="left:22.2px;top:162.8px;width:78.88px;height:15.9px;background:#d2d2d2;"></div>
<svg style="left:8px;top:164px;" width="14" height="14" viewBox="0 0 14 14"><path d="M12.8 1.2 V12.8 H1.2 Z" fill="#b7b7b7"/></svg>
<div style="left:22.2px;top:178.7px;width:985.4px;height:329.6px;background:#fff;"></div>
<div style="left:1007.6px;top:162px;width:16.4px;height:347.6px;background:#e6e6e6;"></div>
<div style="left:0px;top:178.7px;width:22.2px;height:329.6px;background:#e6e6e6;"></div>
<svg style="left:0;top:0" width="1024" height="576" viewBox="0 0 1024 576"><rect x="100.813" y="178.7" width="0.5333" height="329.6" fill="#d0d0d0"/><rect x="100.813" y="163.4" width="0.5333" height="15.3" fill="#8f8f8f"/><rect x="156.283" y="178.7" width="0.5333" height="329.6" fill="#d0d0d0"/><rect x="156.283" y="163.4" width="0.5333" height="15.3" fill="#8f8f8f"/><rect x="211.750" y="178.7" width="0.5333" height="329.6" fill="#d0d0d0"/><rect x="211.750" y="163.4" width="0.5333" height="15.3" fill="#8f8f8f"/><rect x="267.217" y="178.7" width="0.5333" height="329.6" fill="#d0d0d0"/><rect x="267.217" y="163.4" width="0.5333" height="15.3" fill="#8f8f8f"/><rect x="322.683" y="178.7" width="0.5333" height="329.6" fill="#d0d0d0"/><rect x="322.683" y="163.4" width="0.5333" height="15.3" fill="#8f8f8f"/><rect x="378.150" y="178.7" width="0.5333" height="329.6" fill="#d0d0d0"/><rect x="378.150" y="163.4" width="0.5333" height="15.3" fill="#8f8f8f"/><rect x="433.617" y="178.7" width="0.5333" height="329.6" fill="#d0d0d0"/><rect x="433.617" y="163.4" width="0.5333" height="15.3" fill="#8f8f8f"/><rect x="489.084" y="178.7" width="0.5333" height="329.6" fill="#d0d0d0"/><rect x="489.084" y="163.4" width="0.5333" height="15.3" fill="#8f8f8f"/><rect x="544.550" y="178.7" width="0.5333" height="329.6" fill="#d0d0d0"/><rect x="544.550" y="163.4" width="0.5333" height="15.3" fill="#8f8f8f"/><rect x="600.017" y="178.7" width="0.5333" height="329.6" fill="#d0d0d0"/><rect x="600.017" y="163.4" width="0.5333" height="15.3" fill="#8f8f8f"/><rect x="655.484" y="178.7" width="0.5333" height="329.6" fill="#d0d0d0"/><rect x="655.484" y="163.4" width="0.5333" height="15.3" fill="#8f8f8f"/><rect x="710.950" y="178.7" width="0.5333" height="329.6" fill="#d0d0d0"/><rect x="710.950" y="163.4" width="0.5333" height="15.3" fill="#8f8f8f"/><rect x="766.417" y="178.7" width="0.5333" height="329.6" fill="#d0d0d0"/><rect x="766.417" y="163.4" width="0.5333" height="15.3" fill="#8f8f8f"/><rect x="821.884" y="178.7" width="0.5333" height="329.6" fill="#d0d0d0"/><rect x="821.884" y="163.4" width="0.5333" height="15.3" fill="#8f8f8f"/><rect x="877.350" y="178.7" width="0.5333" height="329.6" fill="#d0d0d0"/><rect x="877.350" y="163.4" width="0.5333" height="15.3" fill="#8f8f8f"/><rect x="932.817" y="178.7" width="0.5333" height="329.6" fill="#d0d0d0"/><rect x="932.817" y="163.4" width="0.5333" height="15.3" fill="#8f8f8f"/><rect x="988.284" y="178.7" width="0.5333" height="329.6" fill="#d0d0d0"/><rect x="988.284" y="163.4" width="0.5333" height="15.3" fill="#8f8f8f"/><rect x="21.933" y="178.7" width="0.5333" height="329.6" fill="#9a9a9a"/><rect x="101.08" y="178.634" width="906.52" height="0.5333" fill="#9a9a9a"/><rect x="22.2" y="195.167" width="985.4" height="0.5333" fill="#d0d0d0"/><rect x="0" y="195.167" width="22.2" height="0.5333" fill="#9a9a9a"/><rect x="22.2" y="211.700" width="985.4" height="0.5333" fill="#d0d0d0"/><rect x="0" y="211.700" width="22.2" height="0.5333" fill="#9a9a9a"/><rect x="22.2" y="228.234" width="985.4" height="0.5333" fill="#d0d0d0"/><rect x="0" y="228.234" width="22.2" height="0.5333" fill="#9a9a9a"/><rect x="22.2" y="244.767" width="985.4" height="0.5333" fill="#d0d0d0"/><rect x="0" y="244.767" width="22.2" height="0.5333" fill="#9a9a9a"/><rect x="22.2" y="261.300" width="985.4" height="0.5333" fill="#d0d0d0"/><rect x="0" y="261.300" width="22.2" height="0.5333" fill="#9a9a9a"/><rect x="22.2" y="277.834" width="985.4" height="0.5333" fill="#d0d0d0"/><rect x="0" y="277.834" width="22.2" height="0.5333" fill="#9a9a9a"/><rect x="22.2" y="294.367" width="985.4" height="0.5333" fill="#d0d0d0"/><rect x="0" y="294.367" width="22.2" height="0.5333" fill="#9a9a9a"/><rect x="22.2" y="310.900" width="985.4" height="0.5333" fill="#d0d0d0"/><rect x="0" y="310.900" width="22.2" height="0.5333" fill="#9a9a9a"/><rect x="22.2" y="327.433" width="985.4" height="0.5333" fill="#d0d0d0"/><rect x="0" y="327.433" width="22.2" height="0.5333" fill="#9a9a9a"/><rect x="22.2" y="343.967" width="985.4" height="0.5333" fill="#d0d0d0"/><rect x="0" y="343.967" width="22.2" height="0.5333" fill="#9a9a9a"/><rect x="22.2" y="360.500" width="985.4" height="0.5333" fill="#d0d0d0"/><rect x="0" y="360.500" width="22.2" height="0.5333" fill="#9a9a9a"/><rect x="22.2" y="377.033" width="985.4" height="0.5333" fill="#d0d0d0"/><rect x="0" y="377.033" width="22.2" height="0.5333" fill="#9a9a9a"/><rect x="22.2" y="393.567" width="985.4" height="0.5333" fill="#d0d0d0"/><rect x="0" y="393.567" width="22.2" height="0.5333" fill="#9a9a9a"/><rect x="22.2" y="410.100" width="985.4" height="0.5333" fill="#d0d0d0"/><rect x="0" y="410.100" width="22.2" height="0.5333" fill="#9a9a9a"/><rect x="22.2" y="426.633" width="985.4" height="0.5333" fill="#d0d0d0"/><rect x="0" y="426.633" width="22.2" height="0.5333" fill="#9a9a9a"/><rect x="22.2" y="443.167" width="985.4" height="0.5333" fill="#d0d0d0"/><rect x="0" y="443.167" width="22.2" height="0.5333" fill="#9a9a9a"/><rect x="22.2" y="459.700" width="985.4" height="0.5333" fill="#d0d0d0"/><rect x="0" y="459.700" width="22.2" height="0.5333" fill="#9a9a9a"/><rect x="22.2" y="476.233" width="985.4" height="0.5333" fill="#d0d0d0"/><rect x="0" y="476.233" width="22.2" height="0.5333" fill="#9a9a9a"/><rect x="22.2" y="492.766" width="985.4" height="0.5333" fill="#d0d0d0"/><rect x="0" y="492.766" width="22.2" height="0.5333" fill="#9a9a9a"/><rect x="1007.333" y="178.7" width="0.5333" height="329.6" fill="#8f8f8f"/></svg>
<div style="left:22.2px;top:177.5px;width:78.88px;height:1.2px;background:#217346;"></div>
<span class="t" style="left:57.02px;top:165.8px;font-size:12.8px;line-height:12.8px;color:#217346;font-family:'Liberation Serif',serif;">A</span>
<span class="t" style="left:124.54px;top:165.8px;font-size:12.8px;line-height:12.8px;color:#1a1a1a;font-family:'Liberation Serif',serif;">B</span>
<span class="t" style="left:180.01px;top:165.8px;font-size:12.8px;line-height:12.8px;color:#1a1a1a;font-family:'Liberation Serif',serif;">C</span>
<span class="t" style="left:235.12px;top:165.8px;font-size:12.8px;line-height:12.8px;color:#1a1a1a;font-family:'Liberation Serif',serif;">D</span>
<span class="t" style="left:291.31px;top:165.8px;font-size:12.8px;line-height:12.8px;color:#1a1a1a;font-family:'Liberation Serif',serif;">E</span>
<span class="t" style="left:347.12px;top:165.8px;font-size:12.8px;line-height:12.8px;color:#1a1a1a;font-family:'Liberation Serif',serif;">F</span>
<span class="t" style="left:401.52px;top:165.8px;font-size:12.8px;line-height:12.8px;color:#1a1a1a;font-family:'Liberation Serif',serif;">G</span>
<span class="t" style="left:457.00px;top:165.8px;font-size:12.8px;line-height:12.8px;color:#1a1a1a;font-family:'Liberation Serif',serif;">H</span>
<span class="t" style="left:514.95px;top:165.8px;font-size:12.8px;line-height:12.8px;color:#1a1a1a;font-family:'Liberation Serif',serif;">I</span>
<span class="t" style="left:570.06px;top:165.8px;font-size:12.8px;line-height:12.8px;color:#1a1a1a;font-family:'Liberation Serif',serif;">J</span>
<span class="t" style="left:623.39px;top:165.8px;font-size:12.8px;line-height:12.8px;color:#1a1a1a;font-family:'Liberation Serif',serif;">K</span>
<span class="t" style="left:679.57px;top:165.8px;font-size:12.8px;line-height:12.8px;color:#1a1a1a;font-family:'Liberation Serif',serif;">L</span>
<span class="t" style="left:733.25px;top:165.8px;font-size:12.8px;line-height:12.8px;color:#1a1a1a;font-family:'Liberation Serif',serif;">M</span>
<span class="t" style="left:789.79px;top:165.8px;font-size:12.8px;line-height:12.8px;color:#1a1a1a;font-family:'Liberation Serif',serif;">N</span>
<span class="t" style="left:845.25px;top:165.8px;font-size:12.8px;line-height:12.8px;color:#1a1a1a;font-family:'Liberation Serif',serif;">O</span>
<span class="t" style="left:901.79px;top:165.8px;font-size:12.8px;line-height:12.8px;color:#1a1a1a;font-family:'Liberation Serif',serif;">P</span>
<span class="t" style="left:956.20px;top:165.8px;font-size:12.8px;line-height:12.8px;color:#1a1a1a;font-family:'Liberation Serif',serif;">Q</span>
<span class="t" style="left:4.55px;top:181.97px;font-size:12.3px;line-height:12.3px;color:#1a1a1a;font-family:'Liberation Serif',serif;">41</span>
<span class="t" style="left:24.80px;top:181.72px;font-size:12.8px;line-height:12.8px;color:#000;font-family:'Liberation Serif',serif;-webkit-text-stroke:0.15px #000;">E Volquez</span>
<span class="t" style="left:102.98px;top:181.72px;font-size:12.8px;line-height:12.8px;color:#000;font-family:'Liberation Serif',serif;-webkit-text-stroke:0.15px #000;">CIN</span>
<span class="t" style="left:197.12px;top:181.72px;font-size:12.8px;line-height:12.8px;color:#000;font-family:'Liberation Serif',serif;-webkit-text-stroke:0.15px #000;">17</span>
<span class="t" style="left:258.97px;top:181.72px;font-size:12.8px;line-height:12.8px;color:#000;font-family:'Liberation Serif',serif;-webkit-text-stroke:0.15px #000;">6</span>
<span class="t" style="left:292.05px;top:181.72px;font-size:12.8px;line-height:12.8px;color:#000;font-family:'Liberation Serif',serif;-webkit-text-stroke:0.15px #000;">0.739</span>
<span class="t" style="left:353.91px;top:181.72px;font-size:12.8px;line-height:12.8px;color:#000;font-family:'Liberation Serif',serif;-webkit-text-stroke:0.15px #000;">3.21</span>
<span class="t" style="left:409.37px;top:181.72px;font-size:12.8px;line-height:12.8px;color:#000;font-family:'Liberation Serif',serif;-webkit-text-stroke:0.15px #000;">7.67</span>
<span class="t" style="left:464.84px;top:181.72px;font-size:12.8px;line-height:12.8px;color:#000;font-family:'Liberation Serif',serif;-webkit-text-stroke:0.15px #000;">0.64</span>
<span class="t" style="left:520.31px;top:181.72px;font-size:12.8px;line-height:12.8px;color:#000;font-family:'Liberation Serif',serif;-webkit-text-stroke:0.15px #000;">4.27</span>
<span class="t" style="left:4.55px;top:198.5px;font-size:12.3px;line-height:12.3px;color:#1a1a1a;font-family:'Liberation Serif',serif;">42</span>
<span class="t" style="left:24.80px;top:198.25px;font-size:12.8px;line-height:12.8px;color:#000;font-family:'Liberation Serif',serif;-webkit-text-stroke:0.15px #000;">J Danks</span>
<span class="t" style="left:102.98px;top:198.25px;font-size:12.8px;line-height:12.8px;color:#000;font-family:'Liberation Serif',serif;-webkit-text-stroke:0.15px #000;">CWS</span>
<span class="t" style="left:197.12px;top:198.25px;font-size:12.8px;line-height:12.8px;color:#000;font-family:'Liberation Serif',serif;-webkit-text-stroke:0.15px #000;">12</span>
<span class="t" style="left:258.97px;top:198.25px;font-size:12.8px;line-height:12.8px;color:#000;font-family:'Liberation Serif',serif;-webkit-text-stroke:0.15px #000;">9</span>
<span class="t" style="left:292.05px;top:198.25px;font-size:12.8px;line-height:12.8px;color:#000;font-family:'Liberation Serif',serif;-webkit-text-stroke:0.15px #000;">0.571</span>
<span class="t" style="left:353.91px;top:198.25px;font-size:12.8px;line-height:12.8px;color:#000;font-family:'Liberation Serif',serif;-webkit-text-stroke:0.15px #000;">3.32</span>
<span class="t" style="left:409.37px;top:198.25px;font-size:12.8px;line-height:12.8px;color:#000;font-family:'Liberation Serif',serif;-webkit-text-stroke:0.15px #000;">8.40</span>
<span class="t" style="left:464.84px;top:198.25px;font-size:12.8px;line-height:12.8px;color:#000;font-family:'Liberation Serif',serif;-webkit-text-stroke:0.15px #000;">0.69</span>
<span class="t" style="left:520.31px;top:198.25px;font-size:12.8px;line-height:12.8px;color:#000;font-family:'Liberation Serif',serif;-webkit-text-stroke:0.15px #000;">2.63</span>
<span class="t" style="left:4.55px;top:215.03px;font-size:12.3px;line-height:12.3px;color:#1a1a1a;font-family:'Liberation Serif',serif;">43</span>
<span class="t" style="left:24.80px;top:214.78px;font-size:12.8px;line-height:12.8px;color:#000;font-family:'Liberation Serif',serif;-webkit-text-stroke:0.15px #000;">G Maddux</span>
<span class="t" style="left:102.98px;top:214.78px;font-size:12.8px;line-height:12.8px;color:#000;font-family:'Liberation Serif',serif;-webkit-text-stroke:0.15px #000;">LAD</span>
<span class="t" style="left:203.51px;top:214.78px;font-size:12.8px;line-height:12.8px;color:#000;font-family:'Liberation Serif',serif;-webkit-text-stroke:0.15px #000;">8</span>
<span class="t" style="left:252.58px;top:214.78px;font-size:12.8px;line-height:12.8px;color:#000;font-family:'Liberation Serif',serif;-webkit-text-stroke:0.15px #000;">13</span>
<span class="t" style="left:292.05px;top:214.78px;font-size:12.8px;line-height:12.8px;color:#000;font-family:'Liberation Serif',serif;-webkit-text-stroke:0.15px #000;">0.381</span>
<span class="t" style="left:353.91px;top:214.78px;font-size:12.8px;line-height:12.8px;color:#000;font-family:'Liberation Serif',serif;-webkit-text-stroke:0.15px #000;">4.22</span>
<span class="t" style="left:409.37px;top:214.78px;font-size:12.8px;line-height:12.8px;color:#000;font-family:'Liberation Serif',serif;-webkit-text-stroke:0.15px #000;">9.46</span>
<span class="t" style="left:464.84px;top:214.78px;font-size:12.8px;line-height:12.8px;color:#000;font-family:'Liberation Serif',serif;-webkit-text-stroke:0.15px #000;">0.97</span>
<span class="t" style="left:520.31px;top:214.78px;font-size:12.8px;line-height:12.8px;color:#000;font-family:'Liberation Serif',serif;-webkit-text-stroke:0.15px #000;">1.39</span>
<span class="t" style="left:4.55px;top:231.57px;font-size:12.3px;line-height:12.3px;color:#1a1a1a;font-family:'Liberation Serif',serif;">44</span>
<span class="t" style="left:24.80px;top:231.32px;font-size:12.8px;line-height:12.8px;color:#000;font-family:'Liberation Serif',serif;-webkit-text-stroke:0.15px #000;">O Perez</span>
<span class="t" style="left:102.98px;top:231.32px;font-size:12.8px;line-height:12.8px;color:#000;font-family:'Liberation Serif',serif;-webkit-text-stroke:0.15px #000;">NYM</span>
<span class="t" style="left:197.12px;top:231.32px;font-size:12.8px;line-height:12.8px;color:#000;font-family:'Liberation Serif',serif;-webkit-text-stroke:0.15px #000;">10</span>
<span class="t" style="left:258.97px;top:231.32px;font-size:12.8px;line-height:12.8px;color:#000;font-family:'Liberation Serif',serif;-webkit-text-stroke:0.15px #000;">7</span>
<span class="t" style="left:292.05px;top:231.32px;font-size:12.8px;line-height:12.8px;color:#000;font-family:'Liberation Serif',serif;-webkit-text-stroke:0.15px #000;">0.588</span>
<span class="t" style="left:353.91px;top:231.32px;font-size:12.8px;line-height:12.8px;color:#000;font-family:'Liberation Serif',serif;-webkit-text-stroke:0.15px #000;">4.22</span>
<span class="t" style="left:409.37px;top:231.32px;font-size:12.8px;line-height:12.8px;color:#000;font-family:'Liberation Serif',serif;-webkit-text-stroke:0.15px #000;">7.75</span>
<span class="t" style="left:465.33px;top:231.32px;font-size:12.8px;line-height:12.8px;color:#000;font-family:'Liberation Serif',serif;-webkit-text-stroke:0.15px #000;">1.11</span>
<span class="t" style="left:520.31px;top:231.32px;font-size:12.8px;line-height:12.8px;color:#000;font-family:'Liberation Serif',serif;-webkit-text-stroke:0.15px #000;">4.87</span>
<span class="t" style="left:4.55px;top:248.1px;font-size:12.3px;line-height:12.3px;color:#1a1a1a;font-family:'Liberation Serif',serif;">45</span>
<span class="t" style="left:24.80px;top:247.85px;font-size:12.8px;line-height:12.8px;color:#000;font-family:'Liberation Serif',serif;-webkit-text-stroke:0.15px #000;">N Blackburn</span>
<span class="t" style="left:102.98px;top:247.85px;font-size:12.8px;line-height:12.8px;color:#000;font-family:'Liberation Serif',serif;-webkit-text-stroke:0.15px #000;">MIN</span>
<span class="t" style="left:197.59px;top:247.85px;font-size:12.8px;line-height:12.8px;color:#000;font-family:'Liberation Serif',serif;-webkit-text-stroke:0.15px #000;">11</span>
<span class="t" style="left:253.05px;top:247.85px;font-size:12.8px;line-height:12.8px;color:#000;font-family:'Liberation Serif',serif;-webkit-text-stroke:0.15px #000;">11</span>
<span class="t" style="left:304.85px;top:247.85px;font-size:12.8px;line-height:12.8px;color:#000;font-family:'Liberation Serif',serif;-webkit-text-stroke:0.15px #000;">0.5</span>
<span class="t" style="left:353.91px;top:247.85px;font-size:12.8px;line-height:12.8px;color:#000;font-family:'Liberation Serif',serif;-webkit-text-stroke:0.15px #000;">4.05</span>
<span class="t" style="left:402.98px;top:247.85px;font-size:12.8px;line-height:12.8px;color:#000;font-family:'Liberation Serif',serif;-webkit-text-stroke:0.15px #000;">10.44</span>
<span class="t" style="left:464.84px;top:247.85px;font-size:12.8px;line-height:12.8px;color:#000;font-family:'Liberation Serif',serif;-webkit-text-stroke:0.15px #000;">1.07</span>
<span class="t" style="left:520.31px;top:247.85px;font-size:12.8px;line-height:12.8px;color:#000;font-family:'Liberation Serif',serif;-webkit-text-stroke:0.15px #000;">1.82</span>
<span class="t" style="left:4.55px;top:264.63px;font-size:12.3px;line-height:12.3px;color:#1a1a1a;font-family:'Liberation Serif',serif;">46</span>
<span class="t" style="left:24.80px;top:264.38px;font-size:12.8px;line-height:12.8px;color:#000;font-family:'Liberation Serif',serif;-webkit-text-stroke:0.15px #000;">A Sonnanstine</span>
<span class="t" style="left:102.98px;top:264.38px;font-size:12.8px;line-height:12.8px;color:#000;font-family:'Liberation Serif',serif;-webkit-text-stroke:0.15px #000;">TB</span>
<span class="t" style="left:197.12px;top:264.38px;font-size:12.8px;line-height:12.8px;color:#000;font-family:'Liberation Serif',serif;-webkit-text-stroke:0.15px #000;">13</span>
<span class="t" style="left:258.97px;top:264.38px;font-size:12.8px;line-height:12.8px;color:#000;font-family:'Liberation Serif',serif;-webkit-text-stroke:0.15px #000;">9</span>
<span class="t" style="left:292.05px;top:264.38px;font-size:12.8px;line-height:12.8px;color:#000;font-family:'Liberation Serif',serif;-webkit-text-stroke:0.15px #000;">0.591</span>
<span class="t" style="left:353.91px;top:264.38px;font-size:12.8px;line-height:12.8px;color:#000;font-family:'Liberation Serif',serif;-webkit-text-stroke:0.15px #000;">4.38</span>
<span class="t" style="left:409.37px;top:264.38px;font-size:12.8px;line-height:12.8px;color:#000;font-family:'Liberation Serif',serif;-webkit-text-stroke:0.15px #000;">9.88</span>
<span class="t" style="left:464.84px;top:264.38px;font-size:12.8px;line-height:12.8px;color:#000;font-family:'Liberation Serif',serif;-webkit-text-stroke:0.15px #000;">0.98</span>
<span class="t" style="left:520.31px;top:264.38px;font-size:12.8px;line-height:12.8px;color:#000;font-family:'Liberation Serif',serif;-webkit-text-stroke:0.15px #000;">1.72</span>
<span class="t" style="left:4.55px;top:281.17px;font-size:12.3px;line-height:12.3px;color:#1a1a1a;font-family:'Liberation Serif',serif;">47</span>
<span class="t" style="left:24.80px;top:280.92px;font-size:12.8px;line-height:12.8px;color:#000;font-family:'Liberation Serif',serif;-webkit-text-stroke:0.15px #000;">T Wellemeyer</span>
<span class="t" style="left:102.98px;top:280.92px;font-size:12.8px;line-height:12.8px;color:#000;font-family:'Liberation Serif',serif;-webkit-text-stroke:0.15px #000;">STL</span>
<span class="t" style="left:197.12px;top:280.92px;font-size:12.8px;line-height:12.8px;color:#000;font-family:'Liberation Serif',serif;-webkit-text-stroke:0.15px #000;">13</span>
<span class="t" style="left:258.97px;top:280.92px;font-size:12.8px;line-height:12.8px;color:#000;font-family:'Liberation Serif',serif;-webkit-text-stroke:0.15px #000;">9</span>
<span class="t" style="left:292.05px;top:280.92px;font-size:12.8px;line-height:12.8px;color:#000;font-family:'Liberation Serif',serif;-webkit-text-stroke:0.15px #000;">0.591</span>
<span class="t" style="left:353.91px;top:280.92px;font-size:12.8px;line-height:12.8px;color:#000;font-family:'Liberation Serif',serif;-webkit-text-stroke:0.15px #000;">3.71</span>
<span class="t" style="left:409.37px;top:280.92px;font-size:12.8px;line-height:12.8px;color:#000;font-family:'Liberation Serif',serif;-webkit-text-stroke:0.15px #000;">8.38</span>
<span class="t" style="left:464.84px;top:280.92px;font-size:12.8px;line-height:12.8px;color:#000;font-family:'Liberation Serif',serif;-webkit-text-stroke:0.15px #000;">1.18</span>
<span class="t" style="left:520.31px;top:280.92px;font-size:12.8px;line-height:12.8px;color:#000;font-family:'Liberation Serif',serif;-webkit-text-stroke:0.15px #000;">2.92</span>
<span class="t" style="left:4.55px;top:297.7px;font-size:12.3px;line-height:12.3px;color:#1a1a1a;font-family:'Liberation Serif',serif;">48</span>
<span class="t" style="left:24.80px;top:297.45px;font-size:12.8px;line-height:12.8px;color:#000;font-family:'Liberation Serif',serif;-webkit-text-stroke:0.15px #000;">J Guthrie</span>
<span class="t" style="left:102.98px;top:297.45px;font-size:12.8px;line-height:12.8px;color:#000;font-family:'Liberation Serif',serif;-webkit-text-stroke:0.15px #000;">BAL</span>
<span class="t" style="left:197.12px;top:297.45px;font-size:12.8px;line-height:12.8px;color:#000;font-family:'Liberation Serif',serif;-webkit-text-stroke:0.15px #000;">10</span>
<span class="t" style="left:252.58px;top:297.45px;font-size:12.8px;line-height:12.8px;color:#000;font-family:'Liberation Serif',serif;-webkit-text-stroke:0.15px #000;">12</span>
<span class="t" style="left:292.05px;top:297.45px;font-size:12.8px;line-height:12.8px;color:#000;font-family:'Liberation Serif',serif;-webkit-text-stroke:0.15px #000;">0.455</span>
<span class="t" style="left:353.91px;top:297.45px;font-size:12.8px;line-height:12.8px;color:#000;font-family:'Liberation Serif',serif;-webkit-text-stroke:0.15px #000;">3.63</span>
<span class="t" style="left:409.37px;top:297.45px;font-size:12.8px;line-height:12.8px;color:#000;font-family:'Liberation Serif',serif;-webkit-text-stroke:0.15px #000;">8.33</span>
<span class="t" style="left:464.84px;top:297.45px;font-size:12.8px;line-height:12.8px;color:#000;font-family:'Liberation Serif',serif;-webkit-text-stroke:0.15px #000;">1.14</span>
<span class="t" style="left:520.31px;top:297.45px;font-size:12.8px;line-height:12.8px;color:#000;font-family:'Liberation Serif',serif;-webkit-text-stroke:0.15px #000;">2.74</span>
<span class="t" style="left:4.55px;top:314.23px;font-size:12.3px;line-height:12.3px;color:#1a1a1a;font-family:'Liberation Serif',serif;">49</span>
<span class="t" style="left:24.80px;top:313.98px;font-size:12.8px;line-height:12.8px;color:#000;font-family:'Liberation Serif',serif;-webkit-text-stroke:0.15px #000;">G Smith</span>
<span class="t" style="left:102.98px;top:313.98px;font-size:12.8px;line-height:12.8px;color:#000;font-family:'Liberation Serif',serif;-webkit-text-stroke:0.15px #000;">OAK</span>
<span class="t" style="left:203.51px;top:313.98px;font-size:12.8px;line-height:12.8px;color:#000;font-family:'Liberation Serif',serif;-webkit-text-stroke:0.15px #000;">7</span>
<span class="t" style="left:252.58px;top:313.98px;font-size:12.8px;line-height:12.8px;color:#000;font-family:'Liberation Serif',serif;-webkit-text-stroke:0.15px #000;">16</span>
<span class="t" style="left:292.05px;top:313.98px;font-size:12.8px;line-height:12.8px;color:#000;font-family:'Liberation Serif',serif;-webkit-text-stroke:0.15px #000;">0.304</span>
<span class="t" style="left:353.91px;top:313.98px;font-size:12.8px;line-height:12.8px;color:#000;font-family:'Liberation Serif',serif;-webkit-text-stroke:0.15px #000;">4.16</span>
<span class="t" style="left:409.37px;top:313.98px;font-size:12.8px;line-height:12.8px;color:#000;font-family:'Liberation Serif',serif;-webkit-text-stroke:0.15px #000;">8.00</span>
<span class="t" style="left:464.84px;top:313.98px;font-size:12.8px;line-height:12.8px;color:#000;font-family:'Liberation Serif',serif;-webkit-text-stroke:0.15px #000;">0.99</span>
<span class="t" style="left:520.31px;top:313.98px;font-size:12.8px;line-height:12.8px;color:#000;font-family:'Liberation Serif',serif;-webkit-text-stroke:0.15px #000;">4.12</span>
<span class="t" style="left:4.55px;top:330.77px;font-size:12.3px;line-height:12.3px;color:#1a1a1a;font-family:'Liberation Serif',serif;">50</span>
<span class="t" style="left:24.80px;top:330.52px;font-size:12.8px;line-height:12.8px;color:#000;font-family:'Liberation Serif',serif;-webkit-text-stroke:0.15px #000;">R Wolf</span>
<span class="t" style="left:102.98px;top:330.52px;font-size:12.8px;line-height:12.8px;color:#000;font-family:'Liberation Serif',serif;-webkit-text-stroke:0.15px #000;">HOU</span>
<span class="t" style="left:197.12px;top:330.52px;font-size:12.8px;line-height:12.8px;color:#000;font-family:'Liberation Serif',serif;-webkit-text-stroke:0.15px #000;">12</span>
<span class="t" style="left:252.58px;top:330.52px;font-size:12.8px;line-height:12.8px;color:#000;font-family:'Liberation Serif',serif;-webkit-text-stroke:0.15px #000;">12</span>
<span class="t" style="left:304.85px;top:330.52px;font-size:12.8px;line-height:12.8px;color:#000;font-family:'Liberation Serif',serif;-webkit-text-stroke:0.15px #000;">0.5</span>
<span class="t" style="left:360.32px;top:330.52px;font-size:12.8px;line-height:12.8px;color:#000;font-family:'Liberation Serif',serif;-webkit-text-stroke:0.15px #000;">4.3</span>
<span class="t" style="left:409.37px;top:330.52px;font-size:12.8px;line-height:12.8px;color:#000;font-family:'Liberation Serif',serif;-webkit-text-stroke:0.15px #000;">9.04</span>
<span class="t" style="left:464.84px;top:330.52px;font-size:12.8px;line-height:12.8px;color:#000;font-family:'Liberation Serif',serif;-webkit-text-stroke:0.15px #000;">0.99</span>
<span class="t" style="left:520.31px;top:330.52px;font-size:12.8px;line-height:12.8px;color:#000;font-family:'Liberation Serif',serif;-webkit-text-stroke:0.15px #000;">3.36</span>
<span class="t" style="left:4.55px;top:347.3px;font-size:12.3px;line-height:12.3px;color:#1a1a1a;font-family:'Liberation Serif',serif;">51</span>
<span class="t" style="left:24.80px;top:347.05px;font-size:12.8px;line-height:12.8px;color:#000;font-family:'Liberation Serif',serif;-webkit-text-stroke:0.15px #000;">B Myers</span>
<span class="t" style="left:102.98px;top:347.05px;font-size:12.8px;line-height:12.8px;color:#000;font-family:'Liberation Serif',serif;-webkit-text-stroke:0.15px #000;">PHI</span>
<span class="t" style="left:197.12px;top:347.05px;font-size:12.8px;line-height:12.8px;color:#000;font-family:'Liberation Serif',serif;-webkit-text-stroke:0.15px #000;">10</span>
<span class="t" style="left:252.58px;top:347.05px;font-size:12.8px;line-height:12.8px;color:#000;font-family:'Liberation Serif',serif;-webkit-text-stroke:0.15px #000;">13</span>
<span class="t" style="left:292.05px;top:347.05px;font-size:12.8px;line-height:12.8px;color:#000;font-family:'Liberation Serif',serif;-webkit-text-stroke:0.15px #000;">0.435</span>
<span class="t" style="left:353.91px;top:347.05px;font-size:12.8px;line-height:12.8px;color:#000;font-family:'Liberation Serif',serif;-webkit-text-stroke:0.15px #000;">4.55</span>
<span class="t" style="left:409.37px;top:347.05px;font-size:12.8px;line-height:12.8px;color:#000;font-family:'Liberation Serif',serif;-webkit-text-stroke:0.15px #000;">9.33</span>
<span class="t" style="left:464.84px;top:347.05px;font-size:12.8px;line-height:12.8px;color:#000;font-family:'Liberation Serif',serif;-webkit-text-stroke:0.15px #000;">1.37</span>
<span class="t" style="left:520.31px;top:347.05px;font-size:12.8px;line-height:12.8px;color:#000;font-family:'Liberation Serif',serif;-webkit-text-stroke:0.15px #000;">3.08</span>
<span class="t" style="left:4.55px;top:363.83px;font-size:12.3px;line-height:12.3px;color:#1a1a1a;font-family:'Liberation Serif',serif;">52</span>
<span class="t" style="left:4.55px;top:380.37px;font-size:12.3px;line-height:12.3px;color:#1a1a1a;font-family:'Liberation Serif',serif;">53</span>
<span class="t" style="left:4.55px;top:396.9px;font-size:12.3px;line-height:12.3px;color:#1a1a1a;font-family:'Liberation Serif',serif;">54</span>
<span class="t" style="left:4.55px;top:413.43px;font-size:12.3px;line-height:12.3px;color:#1a1a1a;font-family:'Liberation Serif',serif;">55</span>
<span class="t" style="left:4.55px;top:429.97px;font-size:12.3px;line-height:12.3px;color:#1a1a1a;font-family:'Liberation Serif',serif;">56</span>
<span class="t" style="left:4.55px;top:446.5px;font-size:12.3px;line-height:12.3px;color:#1a1a1a;font-family:'Liberation Serif',serif;">57</span>
<span class="t" style="left:4.55px;top:463.03px;font-size:12.3px;line-height:12.3px;color:#1a1a1a;font-family:'Liberation Serif',serif;">58</span>
<span class="t" style="left:4.55px;top:479.57px;font-size:12.3px;line-height:12.3px;color:#1a1a1a;font-family:'Liberation Serif',serif;">59</span>
<span class="t" style="left:4.55px;top:496.1px;font-size:12.3px;line-height:12.3px;color:#1a1a1a;font-family:'Liberation Serif',serif;">60</span>
<div style="left:0px;top:508.4px;width:1024px;height:17.8px;background:#e6e6e6;"></div>
<div style="left:0px;top:508px;width:1007.6px;height:0.9px;background:#b5b5b5;"></div>
<div style="left:0px;top:525.6px;width:1024px;height:0.8px;background:#d4d4d4;"></div>
<svg style="left:14px;top:513px;" width="6" height="8" viewBox="0 0 6 8"><path d="M4.6 1 L1.4 4 L4.6 7 Z" fill="#c6c6c6"/></svg>
<svg style="left:32px;top:513px;" width="6" height="8" viewBox="0 0 6 8"><path d="M1.4 1 L4.6 4 L1.4 7 Z" fill="#c6c6c6"/></svg>
<div style="left:63.3px;top:508.9px;width:36.4px;height:16.2px;background:#fff;"></div>
<div style="left:63.3px;top:523.7px;width:36.4px;height:1.1px;background:#217346;"></div>
<span class="t" style="left:69.80px;letter-spacing:0.223px;top:511.6px;font-size:10.4px;line-height:10.4px;color:#217346;font-weight:700;">Data</span>
<span class="t" style="left:107.40px;letter-spacing:-0.199px;top:511.5px;font-size:10.2px;line-height:10.2px;color:#444;">Sheet2</span>
<div style="left:147px;top:510.5px;width:1px;height:13.5px;background:#9d9d9d;"></div>
<span class="t" style="left:154.60px;letter-spacing:-0.199px;top:511.5px;font-size:10.2px;line-height:10.2px;color:#444;">Sheet3</span>
<div style="left:194.3px;top:510.5px;width:1px;height:13.5px;background:#9d9d9d;"></div>
<svg style="left:215px;top:510.6px;" width="13" height="13" viewBox="0 0 13 13"><circle cx="6.4" cy="6.4" r="5.4" fill="none" stroke="#777" stroke-width="0.9"/><path d="M3.8 6.4 H9 M6.4 3.8 V9" stroke="#666" stroke-width="0.9"/></svg>
<div style="left:611.8px;top:513.5px;width:1.3px;height:1.3px;background:#a6a6a6;"></div>
<div style="left:611.8px;top:516.5px;width:1.3px;height:1.3px;background:#a6a6a6;"></div>
<div style="left:611.8px;top:519.5px;width:1.3px;height:1.3px;background:#a6a6a6;"></div>
<div style="left:622.9px;top:510.3px;width:386px;height:13.6px;background:#fff;box-sizing:border-box;border:1px solid #c6c6c6;"></div>
<div style="left:636px;top:511px;width:0.8px;height:12.2px;background:#d0d0d0;"></div>
<div style="left:973.6px;top:511.2px;width:21.6px;height:11.4px;background:#d9d9d9;"></div>
<div style="left:995px;top:511px;width:0.8px;height:11.8px;background:#c6c6c6;"></div>
<div style="left:973px;top:511px;width:0.8px;height:11.8px;background:#c6c6c6;"></div>
<svg style="left:626.5px;top:513px;" width="8" height="8" viewBox="0 0 8 8"><path d="M5.4 1 L2 4 L5.4 7 Z" fill="#666"/></svg>
<svg style="left:998.2px;top:512.8px;" width="8" height="8" viewBox="0 0 8 8"><path d="M2.4 1.2 L5.6 4.2 L2.4 7.2 Z" fill="#666"/></svg>
<div style="left:1009.4px;top:176.3px;width:13px;height:216px;background:#d9d9d9;"></div>
<div style="left:1009.4px;top:392px;width:13px;height:104px;background:#fff;box-sizing:border-box;border:1px solid #c9c9c9;"></div>
<div style="left:1009.4px;top:163.2px;width:13px;height:13.2px;background:#fff;box-sizing:border-box;border:1px solid #c9c9c9;"></div>
<div style="left:1009.4px;top:496.8px;width:13px;height:12.2px;background:#fff;box-sizing:border-box;border:1px solid #c9c9c9;"></div>
<svg style="left:1012px;top:165.6px;" width="8" height="7" viewBox="0 0 8 7"><path d="M1 4.9 L3.7 1.9 L6.4 4.9 Z" fill="#666"/></svg>
<svg style="left:1012px;top:499.3px;" width="8" height="7" viewBox="0 0 8 7"><path d="M1.1 2 L3.9 5 L6.7 2 Z" fill="#666"/></svg>
<div style="left:0px;top:526.3px;width:1024px;height:17.7px;background:#f3f2f1;"></div>
<div style="left:787.3px;top:526.3px;width:31.4px;height:17.7px;background:#d2d0ce;"></div>
<svg style="left:797px;top:529.5px;" width="12" height="12" viewBox="0 0 12 12"><path d="M1 1 H10.6 V10.4 H1 Z M1 4.2 H10.6 M1 7.2 H10.6 M4.2 1 V10.4 M7.4 1 V10.4" fill="none" stroke="#555" stroke-width="1"/></svg>
<svg style="left:828.5px;top:529.5px;" width="12" height="12" viewBox="0 0 12 12"><rect x="1" y="1" width="10" height="9.4" fill="none" stroke="#555" stroke-width="1"/><rect x="3.4" y="3.2" width="5.2" height="5" fill="none" stroke="#666" stroke-width="0.9"/><path d="M4.6 5 H7.4 M4.6 6.6 H7.4" stroke="#777" stroke-width="0.7"/></svg>
<svg style="left:860.5px;top:529.5px;" width="12" height="12" viewBox="0 0 12 12"><path d="M1 1 H10.6 V10.4 H1 Z M1 6.4 H4.6 V1 M7.6 1 V6.4 H10.6" fill="none" stroke="#555" stroke-width="1"/></svg>
<div style="left:886.8px;top:534.8px;width:5px;height:0.9px;background:#777;"></div>
<div style="left:897.5px;top:534.8px;width:79px;height:0.9px;background:#a8a8a8;"></div>
<div style="left:935.2px;top:530.6px;width:3.4px;height:9px;background:#666;"></div>
<svg style="left:979px;top:531px;" width="8" height="8" viewBox="0 0 8 8"><path d="M0.8 4.2 H7.2 M4 1 V7.4" stroke="#777" stroke-width="0.9"/></svg>
<span class="t" style="left:997.30px;letter-spacing:-0.395px;top:531.1px;font-size:8.6px;line-height:8.6px;color:#666;">100%</span>
<div style="left:0px;top:544px;width:1024px;height:32px;background:#1d1d1d;"></div>
<svg style="left:12px;top:553px;" width="15" height="15" viewBox="0 0 15 15"><path d="M0.7 2.5 L6 1.8 V6.8 H0.7 Z M6.9 1.7 L13.6 0.8 V6.8 H6.9 Z M0.7 7.7 H6 V12.7 L0.7 12 Z M6.9 7.7 H13.6 V13.7 L6.9 12.8 Z" fill="#fff"/></svg>
<div style="left:38.1px;top:544px;width:275.7px;height:32px;background:#f2f2f2;"></div>
<div style="left:38.1px;top:544px;width:275.7px;height:0.9px;background:#c9c9c9;"></div>
<svg style="left:47px;top:552px;" width="16" height="16" viewBox="0 0 16 16"><circle cx="9.4" cy="6" r="3.9" fill="none" stroke="#222" stroke-width="1.1"/><path d="M6.6 8.8 L1.6 13.8" stroke="#222" stroke-width="1.2"/></svg>
<span class="t" style="left:70.30px;letter-spacing:0.168px;top:555.2px;font-size:11.6px;line-height:11.6px;color:#2b2b2b;">Type here to search</span>
<svg style="left:325px;top:552px;" width="16" height="16" viewBox="0 0 16 16"><circle cx="7.9" cy="8" r="5.4" fill="none" stroke="#fff" stroke-width="1.9"/></svg>
<svg style="left:364px;top:553.5px;" width="15" height="13" viewBox="0 0 15 13"><path d="M1 2.4 V0.9 H10 V2.4 M1 9.8 V11.4 H10 V9.8" fill="none" stroke="#dcdcdc" stroke-width="0.9"/><rect x="1" y="3.8" width="9" height="4.6" fill="none" stroke="#f0f0f0" stroke-width="1"/><path d="M13.2 0.6 V11.8" stroke="#e0e0e0" stroke-width="1"/><rect x="12.4" y="3.6" width="1.7" height="2.2" fill="#fff"/></svg>
<div style="left:396.2px;top:574px;width:32.8px;height:2px;background:#8fc9f2;"></div>
<svg style="left:403.5px;top:552.5px;" width="18" height="15" viewBox="0 0 18 15"><path d="M0.6 1.6 Q0.6 0.6 1.6 0.6 H6 L7.6 2.4 H16 Q17 2.4 17 3.4 V13.6 H0.6 Z" fill="#f5b82e"/><path d="M0.6 4.4 H17 V13.6 Q17 14.4 16 14.4 H1.6 Q0.6 14.4 0.6 13.6 Z" fill="#fcd462"/><rect x="3.6" y="8" width="10.6" height="6.4" fill="#3f8fe0"/><rect x="5.8" y="10.4" width="6.2" height="4" fill="#fcd462"/></svg>
<div style="left:436px;top:574px;width:32.8px;height:2px;background:#8fc9f2;"></div>
<svg style="left:443px;top:551px;" width="18" height="18" viewBox="0 0 18 18"><circle cx="9" cy="9" r="8.8" fill="#dd4b3e"/><path d="M9 9 L1.4 4.6 A8.8 8.8 0 0 0 9 17.8 L12.8 11.2 Z" fill="#1ea362"/><path d="M9 9 L12.8 11.2 L9 17.8 A8.8 8.8 0 0 0 16.6 4.6 H9 Z" fill="#ffce44"/><circle cx="9" cy="9" r="4.1" fill="#f1f1f1"/><circle cx="9" cy="9" r="3.2" fill="#4a8af4"/></svg>
<div style="left:472.6px;top:544px;width:39.2px;height:32px;background:#4a4a4a;"></div>
<div style="left:472.6px;top:574px;width:39.2px;height:2px;background:#8fc9f2;"></div>
<svg style="left:482px;top:551px;" width="20" height="18" viewBox="0 0 20 18"><rect x="5.4" y="0.6" width="13.6" height="16.4" rx="1" fill="#21a366"/><rect x="12.2" y="0.6" width="6.8" height="5.4" fill="#33c481"/><rect x="5.4" y="6" width="6.8" height="5.6" fill="#107c41"/><rect x="12.2" y="6" width="6.8" height="5.6" fill="#21a366"/><rect x="5.4" y="11.6" width="13.6" height="5.4" fill="#185c37"/><rect x="0.4" y="4" width="10" height="10" rx="1" fill="#107c41"/></svg>
<span class="t" style="left:485.03px;top:556.4px;font-size:7.4px;line-height:7.4px;color:#fff;font-weight:700;">X</span>
<div style="left:517.5px;top:574px;width:32.6px;height:2px;background:#8fc9f2;"></div>
<svg style="left:523.5px;top:551.5px;" width="18" height="18" viewBox="0 0 18 18"><rect x="0.4" y="0.4" width="17" height="16.8" rx="1.6" fill="#2d8ce6"/><path d="M0.4 12 L6.8 5.6 L13 12 L17.4 8.4 V15.6 Q17.4 17.2 15.8 17.2 H2 Q0.4 17.2 0.4 15.6 Z" fill="#0f4c9c"/><path d="M0.4 14.4 L6.8 9 L12 13.4 L17.4 10.4 V15.6 Q17.4 17.2 15.8 17.2 H2 Q0.4 17.2 0.4 15.6 Z" fill="#0a3778"/><circle cx="12.6" cy="4.6" r="1.6" fill="#fff"/></svg>
<div style="left:709px;top:552px;width:39px;height:16.4px;background:#22a346;box-sizing:border-box;border:1.2px solid #fff;"></div>
<div style="left:748px;top:556.6px;width:2px;height:7px;background:#fff;"></div>
<span class="t" style="left:715.40px;letter-spacing:-0.370px;top:555.2px;font-size:10.6px;line-height:10.6px;color:#fff;">100%</span>
<svg style="left:753.5px;top:552.5px;" width="9" height="15" viewBox="0 0 9 15"><path d="M2.6 0.8 V4 M6.2 0.8 V4" stroke="#fff" stroke-width="1.3"/><path d="M0.8 4 H8 V7.4 C8 9.4 6.4 10 5.4 10.2 V14 H3.4 V10.2 C2.4 10 0.8 9.4 0.8 7.4 Z" fill="#fff"/></svg>
<svg style="left:772px;top:555px;" width="14" height="10" viewBox="0 0 14 10"><path d="M1.8 7.4 L6.6 2.6 L11.4 7.4" fill="none" stroke="#fff" stroke-width="1"/></svg>
<svg style="left:797.6px;top:554px;" width="14" height="12" viewBox="0 0 14 12"><path d="M3.6 0.6 L6.8 2.7 L3.6 4.8 L0.4 2.7 Z M10 0.6 L13.2 2.7 L10 4.8 L6.8 2.7 Z M3.6 4.8 L6.8 6.9 L3.6 9 L0.4 6.9 Z M10 4.8 L13.2 6.9 L10 9 L6.8 6.9 Z M6.8 7.8 L9.8 9.8 L6.8 11.8 L3.8 9.8 Z" fill="#fff"/></svg>
<svg style="left:822px;top:553px;" width="16" height="13" viewBox="0 0 16 13"><rect x="4" y="5" width="10" height="5.8" fill="#f4f4f4"/><path d="M1.6 2.2 V4.6 L3.6 6.6 M3.4 2.2 V4.2" fill="none" stroke="#fff" stroke-width="0.9"/></svg>
<svg style="left:849px;top:553px;" width="14" height="13" viewBox="0 0 14 13"><path d="M2.4 11.4 A8.8 8.8 0 0 1 11.2 2.6" fill="none" stroke="#8a8a8a" stroke-width="1"/><path d="M4.8 11.4 A6.4 6.4 0 0 1 11.2 5" fill="none" stroke="#f0f0f0" stroke-width="1"/><path d="M7.2 11.4 A4 4 0 0 1 11.2 7.4" fill="none" stroke="#f0f0f0" stroke-width="1"/><circle cx="10.6" cy="11" r="0.9" fill="#fff"/></svg>
<svg style="left:874px;top:553.5px;" width="16" height="13" viewBox="0 0 16 13"><path d="M1.2 4.6 H3.4 L6.4 1.6 V11.4 L3.4 8.4 H1.2 Z" fill="none" stroke="#fff" stroke-width="0.9"/><path d="M8.2 4.6 Q9.4 6.5 8.2 8.4" fill="none" stroke="#e8e8e8" stroke-width="0.8"/><path d="M10 3.2 Q12 6.5 10 9.8" fill="none" stroke="#8a8a8a" stroke-width="0.8"/><path d="M11.8 2 Q14.4 6.5 11.8 11" fill="none" stroke="#555" stroke-width="0.8"/></svg>
<svg style="left:902.5px;top:553.5px;" width="14" height="13" viewBox="0 0 14 13"><path d="M4.4 10.8 C1.8 11.6 1 9 3 7.8 L5.8 6.6 C7.4 6 8.2 7.6 7.4 8.8 M7 4.8 C6.2 3.6 7.4 2.4 8.6 2 L10.4 1.4 C12.6 1 13.2 3.8 11 4.8 L8.2 5.8" fill="none" stroke="#fff" stroke-width="1"/><path d="M5.6 9 L9 3.8" stroke="#fff" stroke-width="0.9"/></svg>
<span class="t" style="left:933.45px;letter-spacing:-0.047px;top:548.0px;font-size:9.6px;line-height:9.6px;color:#fff;">11:50 AM</span>
<span class="t" style="left:931.20px;letter-spacing:0.114px;top:563.0px;font-size:9.6px;line-height:9.6px;color:#fff;">4/26/2021</span>
<svg style="left:990px;top:552.6px;" width="16" height="15" viewBox="0 0 16 15"><path d="M1 1 H14 V10.6 H9.6 L7.4 13 V10.6 H1 Z" fill="none" stroke="#fff" stroke-width="1"/></svg>
<svg style="left:0;top:0" width="1024" height="576" viewBox="0 0 1024 576"><circle cx="1016.4" cy="271.8" r="14.5" fill="#0c7ce4"/><path d="M1011.5 264.1 L1016.1 267.2 L1011.5 270.3 L1006.9 267.2 Z M1020.9 264.1 L1025.5 267.2 L1020.9 270.3 L1016.3 267.2 Z M1011.5 270.6 L1016.1 273.7 L1011.5 276.8 L1006.9 273.7 Z M1020.9 270.6 L1025.5 273.7 L1020.9 276.8 L1016.3 273.7 Z M1016.2 275.9 L1020.6 278.8 L1016.2 281.7 L1011.8 278.8 Z" fill="#fff"/></svg>
</body></html>
